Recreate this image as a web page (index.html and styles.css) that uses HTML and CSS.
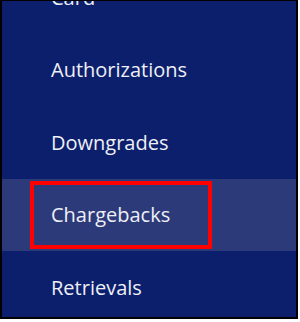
FILE: index.html
```html
<!DOCTYPE html>
<html lang="en">
<head>
    <meta charset="UTF-8">
    <meta name="viewport" content="width=device-width, initial-scale=1.0">
    <title>Disputes Menu</title>
    <link rel="stylesheet" href="styles.css">
</head>
<body>
    <div class="side-menu">
        <ul class="menu-list">
            <li class="menu-item"><span class="menu-label">Card</span></li>
            <li class="menu-item"><span class="menu-label">Authorizations</span></li>
            <li class="menu-item"><span class="menu-label">Downgrades</span></li>
            <li class="menu-item active">
                <span class="callout"><span class="menu-label">Chargebacks</span></span>
            </li>
            <li class="menu-item"><span class="menu-label">Retrievals</span></li>
        </ul>
    </div>
</body>
</html>
```

FILE: styles.css
```css
body {
    margin: 0;
    background: #ffffff;
}

.side-menu {
    width: 298px;
    height: 319px;
    box-sizing: border-box;
    border: 2px solid #000000;
    border-top-width: 1px;
    background: #0c1f6d;
    overflow: hidden;
}

.menu-list {
    list-style: none;
    margin: -40px 0 0 0;
    padding: 0;
}

.menu-item {
    height: 72.5px;
    display: flex;
    align-items: center;
    padding-left: 49px;
    font-family: "Open Sans", sans-serif;
    font-size: 20px;
    color: #eef0f6;
}

.menu-item.active {
    background: #2d3a7a;
    padding-left: 28px;
}

.callout {
    width: 182px;
    height: 68px;
    box-sizing: border-box;
    border: 4px solid #ff0000;
    padding-left: 17px;
    display: flex;
    align-items: center;
}
```
